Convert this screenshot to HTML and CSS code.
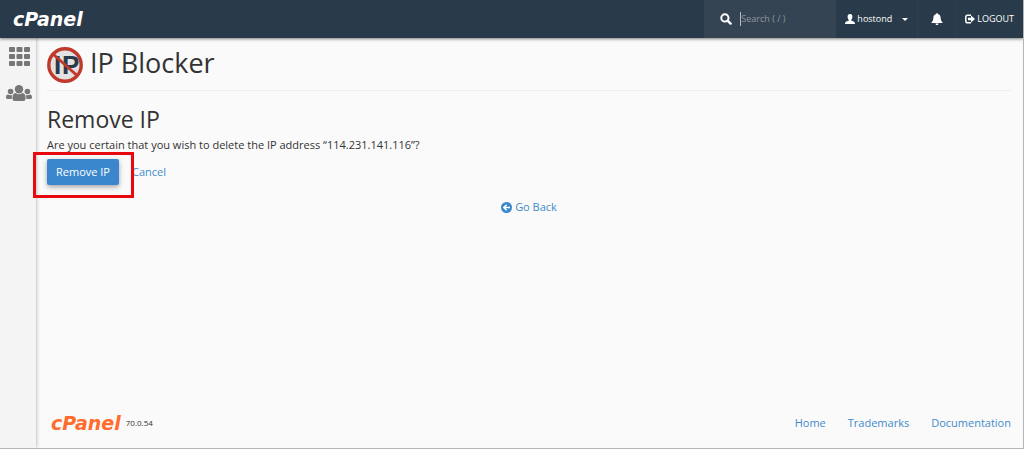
FILE: index.html
```html
<!DOCTYPE html>
<html lang="en">
<head>
    <meta charset="UTF-8">
    <meta name="viewport" content="width=device-width, initial-scale=1">
    <title>cPanel - IP Blocker</title>
    <link rel="stylesheet" href="styles.css">
</head>
<body>
<header class="navbar">
    <a class="brand" href="#">cPanel</a>
    <div class="search">
        <label for="search" aria-label="Search">
            <svg width="12" height="12" viewBox="0 0 12 12">
                <circle cx="4.9" cy="4.9" r="3.6" fill="none" stroke="#fff" stroke-width="2"/>
                <path d="M7.6 7.6L10.6 10.6" stroke="#fff" stroke-width="2.4" stroke-linecap="round"/>
            </svg>
        </label>
        <input id="search" type="text" placeholder="Search ( / )">
    </div>
    <button class="nav-item user" type="button">
        <svg width="10" height="10" viewBox="0 0 10 10" fill="#fff">
            <path d="M5 0C6.700 0 7.500 1.200 7.400 2.900C7.300 4.300 6.800 5.200 6.200 5.800V6.600C7.200 7.200 9.500 7.500 9.800 8.800L10 10H0L.2 8.800C.5 7.500 2.800 7.200 3.800 6.600V5.800C3.200 5.200 2.700 4.300 2.600 2.900C2.500 1.200 3.300 0 5 0Z"/>
        </svg>
        <span>hostond</span>
        <svg class="caret" width="6" height="3" viewBox="0 0 6 3" fill="#fff"><path d="M0 0H6L3 3Z"/></svg>
    </button>
    <button class="nav-item bell" type="button" aria-label="Notifications">
        <svg width="12" height="12" viewBox="0 0 12 12" fill="#fff">
            <path d="M6 0C6.500 0 6.800 .3 6.800 .9C8.600 1.300 9.500 2.700 9.600 4.500C9.700 7 10.400 8.200 11.500 9.200V10H.5V9.200C1.600 8.200 2.300 7 2.400 4.500C2.500 2.700 3.400 1.300 5.200 .9C5.200 .3 5.500 0 6 0ZM4.500 10.500H7.500C7.500 11.500 6.800 12 6 12S4.500 11.500 4.500 10.500Z"/>
        </svg>
    </button>
    <a class="nav-item logout" href="#">
        <svg width="10" height="10" viewBox="0 0 10 10">
            <path d="M6 1.200H2.600Q.8 1.200 .8 3V7Q.8 8.800 2.600 8.800H6" fill="none" stroke="#fff" stroke-width="1.500"/>
            <path d="M3 3.700H6V1.500L10 5L6 8.500V6.300H3Z" fill="#fff"/>
        </svg>
        <span>LOGOUT</span>
    </a>
</header>

<div class="page">
    <nav class="sidebar">
        <a href="#" aria-label="Home">
            <svg width="21" height="19" viewBox="0 0 21 19" fill="#777">
                <rect x="0" y="0" width="6" height="5" rx="1"/>
                <rect x="7.500" y="0" width="6" height="5" rx="1"/>
                <rect x="15" y="0" width="6" height="5" rx="1"/>
                <rect x="0" y="7" width="6" height="5" rx="1"/>
                <rect x="7.500" y="7" width="6" height="5" rx="1"/>
                <rect x="15" y="7" width="6" height="5" rx="1"/>
                <rect x="0" y="14" width="6" height="5" rx="1"/>
                <rect x="7.500" y="14" width="6" height="5" rx="1"/>
                <rect x="15" y="14" width="6" height="5" rx="1"/>
            </svg>
        </a>
        <a href="#" aria-label="User Manager">
            <svg width="26" height="16" viewBox="0 0 26 16" fill="#777">
                <circle cx="13" cy="4.200" r="4.200"/>
                <circle cx="4.600" cy="6.500" r="2.800"/>
                <circle cx="21.400" cy="6.500" r="2.800"/>
                <path d="M9.400 8Q13 10.600 16.600 8Q19.600 8.500 19.600 13.500Q19.600 16 17.300 16H8.700Q6.400 16 6.400 13.500Q6.400 8.500 9.400 8Z"/>
                <path d="M2 9.500Q4.600 11 6.500 9.700Q5.600 11.500 5.600 14H1.700Q0 14 0 12.400Q0 9.500 2 9.500Z"/>
                <path d="M24 9.500Q21.400 11 19.500 9.700Q20.400 11.500 20.400 14H24.300Q26 14 26 12.400Q26 9.500 24 9.500Z"/>
            </svg>
        </a>
    </nav>

    <div class="content">
        <main>
            <h1>
                <svg width="36" height="36" viewBox="0 0 36 36">
                    <circle cx="18" cy="18" r="16" fill="#e2e2e2"/>
                    <text class="icon-text" x="7 15" y="27">IP</text>
                    <path d="M6.500 7.500L29.500 28" stroke="#c0392b" stroke-width="3"/>
                    <circle cx="18" cy="18" r="16.200" fill="none" stroke="#c0392b" stroke-width="3.400"/>
                </svg>
                <span>IP Blocker</span>
            </h1>
            <h2>Remove IP</h2>
            <p>Are you certain that you wish to delete the IP address “114.231.141.116”?</p>
            <form class="actions">
                <div class="highlight">
                    <button class="btn-primary" type="button">Remove IP</button>
                </div>
                <a href="#">Cancel</a>
            </form>
            <div class="go-back">
                <a href="#">
                    <svg width="11" height="11" viewBox="0 0 11 11">
                        <circle cx="5.500" cy="5.500" r="5.500" fill="#3a87cd"/>
                        <path d="M9 5.500H3M5.600 2.700L2.800 5.500L5.600 8.300" fill="none" stroke="#fff" stroke-width="1.500"/>
                    </svg>
                    <span>Go Back</span>
                </a>
            </div>
        </main>
        <footer>
            <a class="brand brand-footer" href="#">cPanel</a>
            <span class="version">70.0.54</span>
            <ul>
                <li><a href="#">Home</a></li>
                <li><a href="#">Trademarks</a></li>
                <li><a href="#">Documentation</a></li>
            </ul>
        </footer>
    </div>
</div>
</body>
</html>
```
FILE: styles.css
```css
* {
    box-sizing: border-box;
}

body {
    margin: 0;
    min-height: 100vh;
    display: flex;
    flex-direction: column;
    background: #fafafa;
    border-right: 1px solid #b5b5b5;
    border-bottom: 1px solid #b5b5b5;
    color: #333;
    font-family: "Open Sans", "Noto Sans", sans-serif;
    font-size: 11px;
    line-height: 16px;
}

a {
    color: #428bca;
    text-decoration: none;
}

svg {
    display: block;
    flex: none;
}

button,
input {
    font: inherit;
}

.navbar {
    display: flex;
    height: 38px;
    background: #293a4a;
    box-shadow: 0 1px 3px rgb(0 0 0 / 50%);
    font-size: 9px;
    z-index: 1;
}

.brand {
    margin: 0 auto 0 13px;
    color: #fff;
    font-family: "DejaVu Sans", sans-serif;
    font-size: 19px;
    font-style: italic;
    font-weight: bold;
    line-height: 38px;
}

.search {
    display: flex;
    align-items: center;
    gap: 8px;
    width: 132px;
    padding: 0 8px 0 16px;
    background: #354453;
}

.search input {
    flex: 1;
    min-width: 0;
    height: 14px;
    padding: 0;
    background: none;
    border: 0;
    border-left: 1px solid #bbb;
    color: #fff;
    outline: 0;
}

.search input::placeholder {
    color: #8d969f;
}

.nav-item {
    display: flex;
    align-items: center;
    justify-content: center;
    gap: 2px;
    padding: 0 9px;
    background: none;
    border: 0;
    border-right: 1px solid #303f4e;
    color: #fff;
}

.caret {
    margin-left: 8px;
}

.bell {
    width: 38px;
}

.logout {
    border-right: 0;
}

.page {
    display: flex;
    flex: 1;
}

.sidebar {
    display: flex;
    flex-direction: column;
    align-items: center;
    gap: 19px;
    width: 36px;
    padding: 9px 0 0 2px;
    background: #f4f4f4;
    box-shadow: 0 0 4px rgb(0 0 0 / 35%);
}

.content {
    display: flex;
    flex: 1;
    flex-direction: column;
    padding: 0 12px 0 11px;
}

main {
    flex: 1;
}

h1 {
    display: flex;
    gap: 7px;
    height: 53px;
    margin: 0 0 14px;
    padding-top: 9px;
    border-bottom: 1px solid #eee;
    font-size: 27px;
    font-weight: 400;
    line-height: 32px;
}

.icon-text {
    fill: #293a4a;
    font-family: "Liberation Sans", sans-serif;
    font-size: 26px;
    font-weight: 700;
}

h2 {
    margin: 0 0 4px;
    font-size: 23px;
    font-weight: 400;
    line-height: 28px;
}

p {
    margin: 0 0 6px;
}

.actions {
    display: flex;
    align-items: center;
    gap: 13px;
}

/* red frame around the button to click */
.highlight {
    position: relative;
}

.highlight::after {
    content: "";
    position: absolute;
    inset: -7px -15px -13px -14px;
    border: 3px solid #e8090f;
    pointer-events: none;
}

.btn-primary {
    display: block;
    height: 26px;
    padding: 0 9px;
    background: #3a87cd;
    border: 0;
    border-radius: 2px;
    box-shadow: 0 2px 5px rgb(0 0 0 / 35%);
    color: #fff;
}

.go-back {
    display: flex;
    justify-content: center;
    margin-top: 14px;
}

.go-back a {
    display: flex;
    align-items: center;
    gap: 3px;
}

footer {
    display: flex;
    align-items: center;
    padding-bottom: 6px;
}

.brand-footer {
    margin: 0 5px 0 4px;
    color: #ff6c2c;
}

.version {
    font-size: 8px;
}

footer ul {
    display: flex;
    gap: 22px;
    margin: 0 0 0 auto;
    padding: 0;
    list-style: none;
}
```
